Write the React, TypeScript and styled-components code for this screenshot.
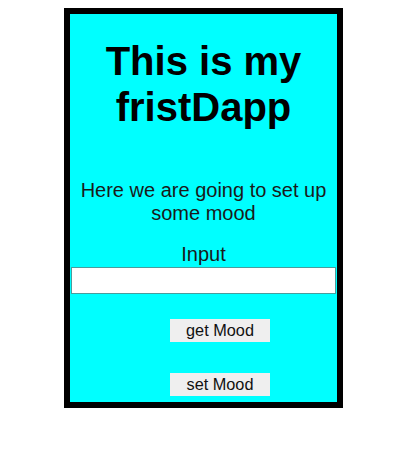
import React from "react";
import styled, { createGlobalStyle } from "styled-components";

const GlobalStyle = createGlobalStyle`
    body {
        margin: 8px;
        background: #ffffff;
        font-family: "Liberation Sans", Arial, sans-serif;
    }
`

const Card = styled.div`
    width: 267px;
    margin-left: 56px;
    border: 6px solid #000000;
    background: #00ffff;
    display: flex;
    flex-direction: column;
    align-items: center;
    padding: 24px 0 6px;
    text-align: center;
`

const Title = styled.h1`
    margin: 0;
    font-size: 40px;
    line-height: 46px;
    font-weight: bold;
    color: #000000;
`

const Intro = styled.p`
    margin: 49px 0 0;
    font-size: 20px;
    line-height: 23px;
    color: #1a1a1a;
`

const Label = styled.label`
    margin-top: 18px;
    font-size: 20px;
    line-height: 23px;
    color: #1a1a1a;
`

const MoodInput = styled.input`
    box-sizing: border-box;
    width: 265px;
    height: 27px;
    margin-top: 1px;
    border: 1px solid #4a9c9c;
    background: #ffffff;
    padding: 0 4px;
    font-size: 16px;
    outline: none;
`

const MoodButton = styled.button<{ $gap: number }>`
    align-self: flex-start;
    width: 100px;
    height: 23px;
    margin: ${(p) => p.$gap}px 0 0 100px;
    border: none;
    background: #efefef;
    color: #111111;
    font-family: "Liberation Sans", Arial, sans-serif;
    font-size: 16.3px;
    padding: 0;
    cursor: pointer;
`

const App: React.FunctionComponent = () => {
    return (
        <>
            <GlobalStyle />
            <Card>
                <Title>
                    This is my
                    <br />
                    fristDapp
                </Title>
                <Intro>
                    Here we are going to set up
                    <br />
                    some mood
                </Intro>
                <Label htmlFor="mood">Input</Label>
                <MoodInput id="mood" type="text" />
                <MoodButton $gap={25}>get Mood</MoodButton>
                <MoodButton $gap={31}>set Mood</MoodButton>
            </Card>
        </>
    )
}

export default App;
